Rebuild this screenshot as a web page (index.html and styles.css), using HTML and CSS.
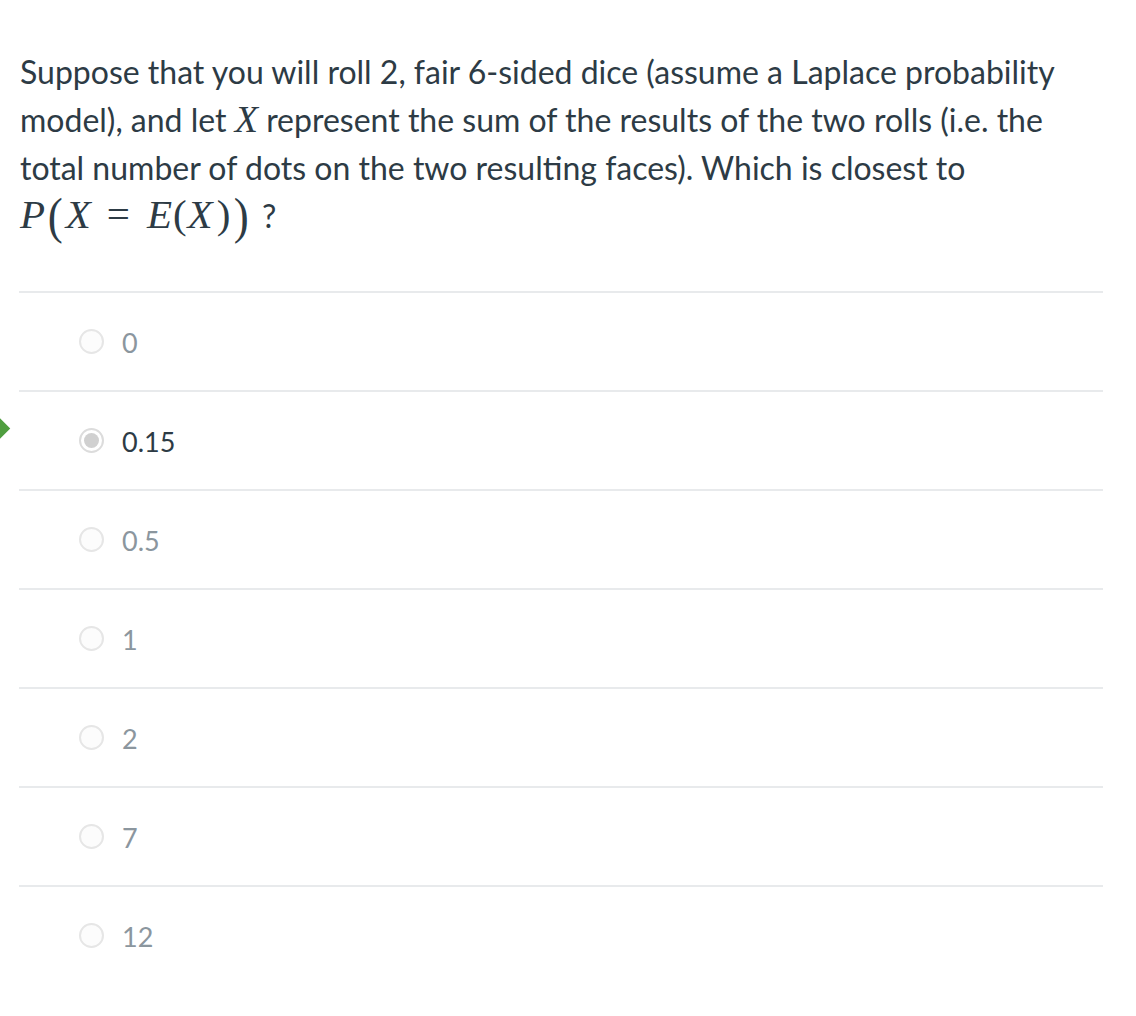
FILE: index.html
```html
<!DOCTYPE html>
<html>
<head>
<meta charset="utf-8">
<link rel="stylesheet" href="styles.css">
</head>
<body>
<div class="marker"></div>
<div class="quiz">
  <div class="question">
    <p>Suppose that you will roll 2, fair 6-sided dice (assume a Laplace probability model), and let <span class="m">X</span> represent the sum of the results of the two rolls (i.e. the total number of dots on the two resulting faces). Which is closest to<br><span class="math"><span class="m mp">P</span><span class="big">(</span><span class="m mx">X</span><span class="op">=</span><span class="m">E</span><span class="r">(</span><span class="m mx">X</span><span class="r">)</span><span class="big">)</span></span><span class="q">?</span></p>
  </div>
  <ul class="answers">
    <li class="answer"><span class="radio"></span><span class="label">0</span></li>
    <li class="answer selected"><span class="radio"></span><span class="label">0.15</span></li>
    <li class="answer"><span class="radio"></span><span class="label">0.5</span></li>
    <li class="answer"><span class="radio"></span><span class="label">1</span></li>
    <li class="answer"><span class="radio"></span><span class="label">2</span></li>
    <li class="answer"><span class="radio"></span><span class="label">7</span></li>
    <li class="answer last"><span class="radio"></span><span class="label">12</span></li>
  </ul>
</div>
</body>
</html>
```

FILE: styles.css
```css
html, body {
  margin: 0;
  padding: 0;
  background: #ffffff;
}
body {
  font-family: Lato, "Open Sans", sans-serif;
  color: #2d3b45;
  position: relative;
}
.quiz {
  padding: 48px 33px 0 19px;
}
.question p {
  margin: 0;
  padding-left: 1px;
  font-size: 32px;
  line-height: 48px;
}
.m {
  font-family: "Liberation Serif", "DejaVu Serif", serif;
  font-style: italic;
  font-size: 38px;
  line-height: 40px;
}
.math {
  white-space: nowrap;
  display: inline-block;
  line-height: 40px;
  vertical-align: baseline;
}
.math .m {
  font-size: 41px;
}
.math .mx {
  margin-right: 3px;
}
.math .op {
  font-family: "Liberation Serif", serif;
  font-size: 41px;
  margin: 0 17px 0 13px;
}
.math .r {
  font-family: "Liberation Serif", serif;
  font-size: 41px;
  margin: 0 1px;
}
.math .big {
  font-family: "Liberation Serif", serif;
  font-size: 50px;
  display: inline-block;
  transform: scaleX(0.9);
  vertical-align: -5px;
  margin: 0 2px;
}
.q {
  margin-left: 10px;
}
.answers {
  list-style: none;
  margin: 51px 0 0 0;
  padding: 0;
}
.answer {
  display: flex;
  align-items: center;
  height: 97px;
  border-top: 2px solid #e8eaec;
  padding-left: 60px;
  font-size: 27px;
  color: #8b969e;
}
.answer .label {
  position: relative;
  top: 1px;
}
.radio {
  width: 21px;
  height: 21px;
  border-radius: 50%;
  border: 2px solid #e6e6e6;
  background: #fcfcfc;
  margin-right: 18px;
  box-sizing: content-box;
  flex: none;
  position: relative;
}
.selected {
  color: #2d3b45;
}
.selected .radio {
  border-color: #dcdcdc;
  background: #ffffff;
}
.selected .radio::after {
  content: "";
  position: absolute;
  left: 3px;
  top: 3px;
  width: 15px;
  height: 15px;
  border-radius: 50%;
  background: #d0d0d0;
}
.marker {
  position: absolute;
  left: -17px;
  top: 419px;
  width: 24px;
  height: 24px;
  background: #4f9e3f;
  transform: rotate(45deg) scale(0.75, 1.05);
}
```
